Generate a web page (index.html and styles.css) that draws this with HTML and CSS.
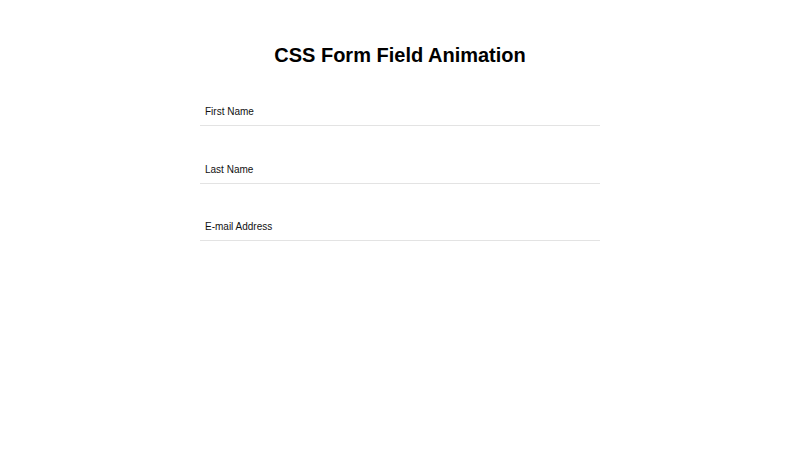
FILE: index.html
```html
<!DOCTYPE html>
<html lang="en">
<head>
    <meta charset="UTF-8">
    <meta name="viewport" content="width=device-width, initial-scale=1.0">
    <title>CSS Form Field Animation</title>
    <link rel="stylesheet" href="styles.css">
</head>
<body>
    <h1 class="title">CSS Form Field Animation</h1>
    <form class="form">
        <div class="field">
            <input type="text" id="first-name" required>
            <label for="first-name">First Name</label>
        </div>
        <div class="field">
            <input type="text" id="last-name" required>
            <label for="last-name">Last Name</label>
        </div>
        <div class="field">
            <input type="email" id="email" required>
            <label for="email">E-mail Address</label>
        </div>
    </form>
</body>
</html>
```

FILE: styles.css
```css
body {
    margin: 0;
    background: #fff;
    color: #000;
    font-family: "Liberation Sans", Arial, sans-serif;
}
.title {
    margin: 44px 0 28px 0;
    font-size: 20px;
    line-height: 23px;
    font-weight: 700;
    text-align: center;
}
.form {
    width: 400px;
    margin: 0 auto;
}
.field {
    position: relative;
    margin-bottom: 26.5px;
}
.field input {
    display: block;
    box-sizing: border-box;
    width: 100%;
    height: 31px;
    padding: 0 5px;
    border: none;
    border-bottom: 1px solid #e3e3e3;
    outline: 0;
    background: transparent;
    font-family: inherit;
    font-size: 10px;
}
.field label {
    position: absolute;
    left: 5px;
    bottom: 8px;
    font-size: 10px;
    line-height: 12px;
    color: #111;
    pointer-events: none;
    transition: all 0.3s ease; /* label floats up on focus */
}
.field input:focus + label,
.field input:valid + label {
    bottom: 24px;
    font-size: 8px;
    color: #777;
}
.field input:focus {
    border-bottom-color: #333;
}
```
